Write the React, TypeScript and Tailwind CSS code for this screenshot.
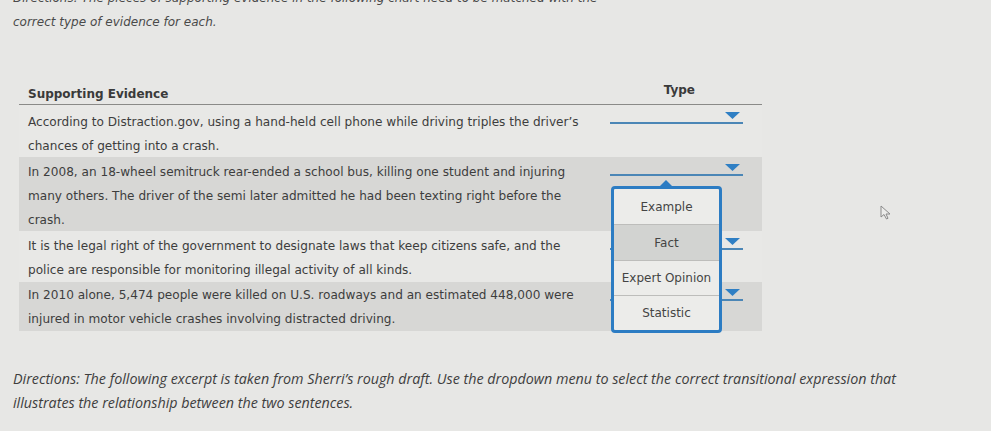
import React from "react";

const rows = [
  {
    lines: [
      "According to Distraction.gov, using a hand-held cell phone while driving triples the driver\u2019s",
      "chances of getting into a crash.",
    ],
    grey: false,
    h: "h-[52px]",
    pt: "pt-[5px]",
  },
  {
    lines: [
      "In 2008, an 18-wheel semitruck rear-ended a school bus, killing one student and injuring",
      "many others. The driver of the semi later admitted he had been texting right before the",
      "crash.",
    ],
    grey: true,
    h: "h-[74px]",
    pt: "pt-[3px]",
  },
  {
    lines: [
      "It is the legal right of the government to designate laws that keep citizens safe, and the",
      "police are responsible for monitoring illegal activity of all kinds.",
    ],
    grey: false,
    h: "h-[51px]",
    pt: "pt-[3px]",
  },
  {
    lines: [
      "In 2010 alone, 5,474 people were killed on U.S. roadways and an estimated 448,000 were",
      "injured in motor vehicle crashes involving distracted driving.",
    ],
    grey: true,
    h: "h-[49px]",
    pt: "pt-[1px]",
  },
];

function Dropdown() {
  return (
    <div className="relative mt-[7px] w-[133px] h-[12px] border-b-2 border-[#4b86b6]">
      <svg className="absolute right-[3px] top-0" width="15" height="7" viewBox="0 0 15 7">
        <polygon points="0,0 15,0 7.5,7" fill="#2f7fc4" />
      </svg>
    </div>
  );
}

export default function App() {
  return (
    <div
      className="w-[991px] h-[431px] overflow-hidden bg-[#e7e7e5] text-[#3d3d3d] relative"
      style={{ fontFamily: '"DejaVu Sans", Verdana, sans-serif' }}
    >
      <div className="pl-[13px] -mt-[13px] text-[12px] italic text-[#4a4a4a]">
        <div className="whitespace-nowrap leading-[22px]">Directions: The pieces of supporting evidence in the following chart need to be matched with the</div>
        <div className="leading-[26px]">correct type of evidence for each.</div>
      </div>

      <div className="relative ml-[19px] mt-[40px] w-[743px]">
        <div className="flex items-end h-[30px] border-b border-[#8a8a88]">
          <div className="pl-[9px] pb-[2px] font-bold text-[12px] leading-[15px] text-[#3a3a3a]">Supporting Evidence</div>
          <div className="ml-auto mr-[67px] mb-[6px] font-bold text-[12px] leading-[15px] text-[#3a3a3a]">Type</div>
        </div>
        {rows.map((r, i) => (
          <div
            key={i}
            className={`flex ${r.h} ${r.grey ? "bg-[#d7d7d5]" : "bg-[#e8e8e6]"}`}
          >
            <div className={`pl-[9px] ${r.pt} w-[591px] text-[12.1px] leading-[24px] text-[#3d3d3d]`}>
              {r.lines.map((l, j) => (
                <div key={j} className="whitespace-nowrap">{l}</div>
              ))}
            </div>
            <Dropdown />
          </div>
        ))}

        <div className="absolute left-[592px] top-[111px] w-[111px]">
          <svg className="absolute left-[47px] -top-[6px]" width="16" height="8" viewBox="0 0 16 8">
            <polygon points="0,8 8,0 16,8" fill="#2c7cc3" />
          </svg>
          <div className="border-[3px] border-[#2c7cc3] rounded-[4px] bg-[#ececea] overflow-hidden text-[12px] text-[#444]">
            <div className="h-[36px] flex items-center justify-center border-b border-[#bdbdbb]">Example</div>
            <div className="h-[36px] flex items-center justify-center border-b border-[#bdbdbb] bg-[#d2d3d1]">Fact</div>
            <div className="h-[35px] flex items-center justify-center border-b border-[#bdbdbb]">Expert Opinion</div>
            <div className="h-[34px] flex items-center justify-center">Statistic</div>
          </div>
        </div>
      </div>

      <svg className="absolute left-[880px] top-[205px]" width="14" height="16" viewBox="0 0 14 16">
        <path d="M1 1 L1 12 L4 9.5 L6.5 14 L8 13.3 L6 9 L10 9 Z" fill="#ececea" stroke="#8a8a8a" strokeWidth="1" />
      </svg>

      <div
        className="absolute left-[13px] top-[367px] italic text-[14.3px] leading-[24px] text-[#3e3e3e]"
        style={{ fontFamily: '"Open Sans", "Liberation Sans", sans-serif' }}
      >
        <div className="whitespace-nowrap">Directions: The following excerpt is taken from Sherri’s rough draft. Use the dropdown menu to select the correct transitional expression that</div>
        <div>illustrates the relationship between the two sentences.</div>
      </div>
    </div>
  );
}
